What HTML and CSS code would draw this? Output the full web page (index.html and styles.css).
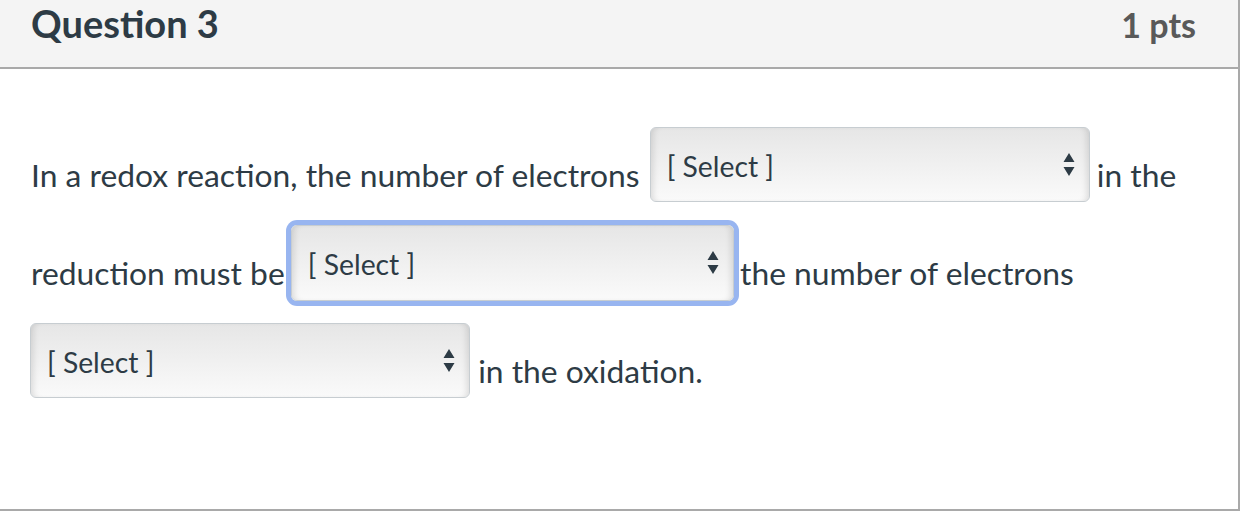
FILE: index.html
```html
<!DOCTYPE html>
<html lang="en">
<head>
<meta charset="utf-8">
<title>Question 3</title>
<link rel="stylesheet" href="styles.css">
</head>
<body>
<div class="panel">
  <div class="panel-header">
    <h2 class="title">Question 3</h2>
    <span class="points">1 pts</span>
  </div>
  <div class="panel-body">
    <p class="question">In a redox reaction, the number of electrons <span class="select first"><span class="select-label">[ Select ]</span><svg class="arrows" width="12" height="24" viewBox="0 0 12 24"><path d="M6 0 L11.5 9 L0.5 9 Z M0.5 14 L11.5 14 L6 23 Z" fill="#2d3b45"/></svg></span> in the reduction must be <span class="select focused"><span class="select-label">[ Select ]</span><svg class="arrows" width="12" height="24" viewBox="0 0 12 24"><path d="M6 0 L11.5 9 L0.5 9 Z M0.5 14 L11.5 14 L6 23 Z" fill="#2d3b45"/></svg></span> the number of electrons <span class="select third"><span class="select-label">[ Select ]</span><svg class="arrows" width="12" height="24" viewBox="0 0 12 24"><path d="M6 0 L11.5 9 L0.5 9 Z M0.5 14 L11.5 14 L6 23 Z" fill="#2d3b45"/></svg></span> in the oxidation.</p>
  </div>
</div>
</body>
</html>
```
FILE: styles.css
```css
html, body {
  margin: 0;
  padding: 0;
  background: #ffffff;
}
body {
  font-family: Lato, "Open Sans", sans-serif;
  color: #2d3b45;
}
.panel {
  width: 1240px;
  height: 511px;
  box-sizing: border-box;
  border-right: 2px solid #a9a9a9;
  border-bottom: 2px solid #a9a9a9;
}
.panel-header {
  height: 69px;
  box-sizing: border-box;
  background: #f4f4f4;
  border-bottom: 2px solid #a9a9a9;
  display: flex;
  align-items: flex-start;
  justify-content: space-between;
  padding: 0 42px 0 31px;
}
.title {
  margin: 0;
  font-size: 38px;
  line-height: 46px;
  font-weight: 700;
  color: #2d3b45;
}
.points {
  font-size: 34px;
  line-height: 46px;
  margin-top: 2px;
  font-weight: 700;
  color: #595959;
}
.panel-body {
  padding: 0 31px;
}
.question {
  margin: 0;
  padding-top: 57px;
  font-size: 31.8px;
  line-height: 98px;
}
.select {
  display: inline-block;
  position: relative;
  width: 440px;
  height: 75px;
  box-sizing: border-box;
  border: 1px solid #c7cdd1;
  border-radius: 6px;
  background: linear-gradient(#e6e6e6, #fafafa);
  box-shadow: inset 6px 0 6px -4px rgba(0,0,0,0.12), inset -6px 0 6px -4px rgba(0,0,0,0.12);
  vertical-align: 10px;
  line-height: 1;
  padding: 23px 0 0 16px;
  font-size: 28.3px;
}
.select.first {
  margin: 0 -1px 0 2px;
}
.select.focused {
  height: 76px;
  width: 443px;
  box-shadow: 0 0 0 5px #98b5f0, inset 6px 0 6px -4px rgba(0,0,0,0.12), inset -6px 0 6px -4px rgba(0,0,0,0.12);
  margin: 0 -2px 0 -2px;
}
.select.third {
  margin: 0 0 0 -1px;
}
.select-label {
  display: inline-block;
  height: 30px;
  line-height: 30px;
}
.arrows {
  position: absolute;
  right: 14px;
  top: 25px;
}
```
